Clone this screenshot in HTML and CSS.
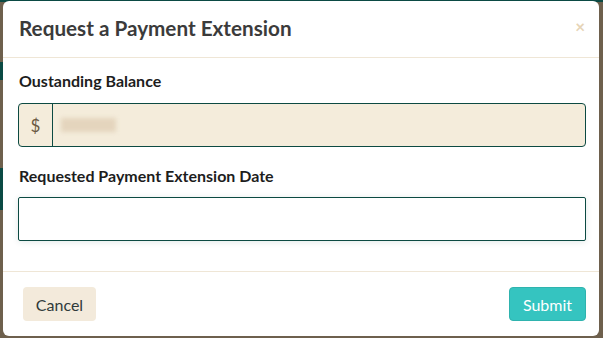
FILE: index.html
```html
<!DOCTYPE html>
<html>
<head>
<meta charset="utf-8">
<link rel="stylesheet" href="styles.css">
</head>
<body>
<div class="backdrop">
  <div class="modal">
    <div class="modal-header">
      <h2 class="modal-title">Request a Payment Extension</h2>
      <span class="close">&times;</span>
    </div>
    <div class="modal-body">
      <label class="field-label">Oustanding Balance</label>
      <div class="input-group">
        <span class="addon">$</span>
        <div class="value"><span class="blur"></span></div>
      </div>
      <label class="field-label second">Requested Payment Extension Date</label>
      <div class="date-input"></div>
    </div>
    <div class="modal-footer">
      <button class="btn btn-cancel">Cancel</button>
      <button class="btn btn-submit">Submit</button>
    </div>
  </div>
</div>
</body>
</html>
```

FILE: styles.css
```css
html, body {
  margin: 0;
  padding: 0;
}
body {
  width: 603px;
  height: 338px;
  overflow: hidden;
  background: #6e604d;
  font-family: Lato, "Open Sans", sans-serif;
}
.backdrop {
  height: 338px;
  background:
    linear-gradient(#0b4a44, #0b4a44) top left / 100% 2px no-repeat,
    linear-gradient(#0b4a44, #0b4a44) 0 62px / 3px 18px no-repeat,
    linear-gradient(#0b4a44, #0b4a44) 0 168px / 3px 42px no-repeat,
    #6e604d;
  padding: 1px 4px 0 3px;
  box-sizing: border-box;
}
.modal {
  background: #fff;
  border-radius: 6px;
  height: 335px;
  display: flex;
  flex-direction: column;
  box-sizing: border-box;
}
.modal-header {
  height: 56px;
  border-bottom: 1px solid #efe6d6;
  display: flex;
  align-items: center;
  justify-content: space-between;
  padding: 0 14px 0 16px;
  flex: none;
}
.modal-title {
  margin: 0;
  font-size: 20.7px;
  font-weight: 700;
  color: #3b3b3b;
  position: relative;
  top: -1px;
}
.close {
  color: #e6d4b6;
  font-size: 17px;
  font-weight: 700;
  line-height: 1;
  position: relative;
  top: -3px;
}
.modal-body {
  padding: 13px 13px 0 15px;
  height: 214px;
  box-sizing: border-box;
  border-bottom: 1px solid #efe6d6;
  flex: none;
}
.field-label {
  display: block;
  font-size: 16px;
  font-weight: 700;
  color: #1d1d1d;
  line-height: 20px;
  padding-left: 1px;
}
.field-label.second {
  margin-top: 19px;
}
.input-group {
  margin-top: 12px;
  height: 44px;
  border: 1.5px solid #0c4a42;
  border-radius: 4px;
  background: #f4ecdb;
  display: flex;
  box-sizing: border-box;
}
.addon {
  width: 33px;
  border-right: 1.5px solid #0c4a42;
  display: flex;
  align-items: center;
  justify-content: center;
  color: #6a5a43;
  font-size: 17px;
  flex: none;
}
.value {
  flex: 1;
  display: flex;
  align-items: center;
  padding-left: 8px;
}
.blur {
  width: 55px;
  height: 14px;
  background: #e4d5bd;
  filter: blur(2px);
}
.date-input {
  margin-top: 11px;
  height: 44px;
  border: 1.5px solid #0c4a42;
  border-radius: 2px;
  background: #fff;
  box-sizing: border-box;
  box-shadow: 0 1px 6px rgba(12, 74, 66, 0.12);
}
.modal-footer {
  flex: 1;
  display: flex;
  align-items: center;
  justify-content: space-between;
  padding: 0 13px 0 20px;
}
.btn {
  font-family: Lato, "Open Sans", sans-serif;
  font-size: 16px;
  height: 34px;
  border-radius: 4px;
  border: none;
  padding: 0;
  cursor: pointer;
}
.btn-cancel {
  width: 73px;
  background: #f3eadb;
  color: #2f3a3a;
}
.btn-submit {
  width: 77px;
  background: #35c4c0;
  color: #fff;
  border: 1px solid #2fb3ae;
}
```
